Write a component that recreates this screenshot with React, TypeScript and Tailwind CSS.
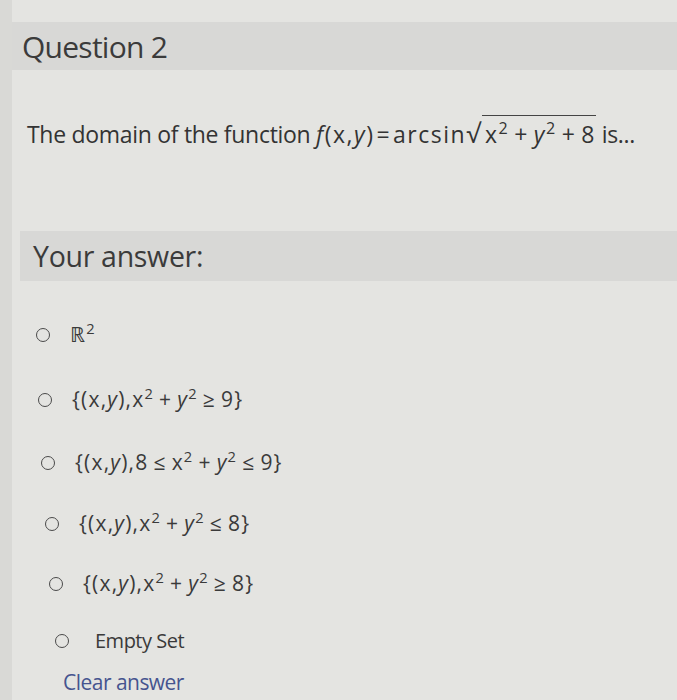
import React from "react";

const font = { fontFamily: '"Open Sans", "Noto Sans", sans-serif' };

function Sup({ children }: { children: React.ReactNode }) {
  return <sup className="relative -top-[0.55em] text-[0.7em]">{children}</sup>;
}

function Op({ children, m = "mx-[5px]" }: { children: React.ReactNode; m?: string }) {
  return <span className={m}>{children}</span>;
}

function Radio() {
  return <span className="inline-block h-[14px] w-[14px] shrink-0 rounded-full border-[1.5px] border-[#4a4a4a]" />;
}

function Option({ pl, h, children }: { pl: string; h: string; children: React.ReactNode }) {
  return (
    <div className={`flex items-center gap-[20px] ${pl} ${h}`}>
      <Radio />
      <span className="text-[21px] tracking-[1.2px] text-[#3a3a3a]">{children}</span>
    </div>
  );
}

function Set({ a, b, c }: { a?: string; b: string; c: string }) {
  return (
    <>
      {"{"}(x,<span className="italic">y</span>),
      {a && (
        <>
          {a}
          <Op>≤</Op>
        </>
      )}
      x<Sup>2</Sup>
      <Op>+</Op>
      <span className="italic">y</span>
      <Sup>2</Sup>
      <Op>{b}</Op>
      {c}
      {"}"}
    </>
  );
}

export default function App() {
  return (
    <div className="flex h-[700px] w-[677px] bg-[#e4e4e1] text-[#333]" style={font}>
      <div className="w-[12px] bg-[#d9d9d6]" />
      <div className="flex flex-1 flex-col">
        <div className="mt-[22px] flex h-[48px] items-center bg-[#d8d8d6] pl-[10px] text-[30px] tracking-tight text-[#3b3b3b]">
          Question 2
        </div>
        <div className="mt-[44px] pl-[15px] text-[23px] tracking-[-0.3px] text-[#333]">
          The domain of the function{" "}
          <span className="tracking-[1.5px]">
            <span className="italic">f</span>(x,<span className="italic">y</span>)<Op m="mx-[2px]">=</Op>arcsin
            <span className="text-[26px]">√</span>
            <span className="border-t-[1.5px] border-[#444] pt-[2px] pl-[3px]">
              x<Sup>2</Sup>
              <Op>+</Op>
              <span className="italic">y</span>
              <Sup>2</Sup>
              <Op>+</Op>8
            </span>
          </span>{" "}
          is...
        </div>
        <div className="ml-[8px] mt-[78px] flex h-[50px] items-center bg-[#d8d8d6] pl-[13px] text-[28.5px] tracking-[-0.3px] text-[#3b3b3b]">
          Your answer:
        </div>
        <div className="mt-[22px] flex flex-col">
          <Option pl="pl-[24px]" h="h-[64px]">
            <span className="font-bold">ℝ</span>
            <Sup>2</Sup>
          </Option>
          <Option pl="pl-[26px]" h="h-[66px]">
            <Set b="≥" c="9" />
          </Option>
          <Option pl="pl-[29px]" h="h-[60px]">
            <Set a="8" b="≤" c="9" />
          </Option>
          <Option pl="pl-[33px]" h="h-[62px]">
            <Set b="≤" c="8" />
          </Option>
          <Option pl="pl-[37px]" h="h-[58px]">
            <Set b="≥" c="8" />
          </Option>
          <div className="flex h-[56px] items-center gap-[26px] pl-[43px]">
            <Radio />
            <span className="text-[20px] tracking-tight text-[#3a3a3a]">Empty Set</span>
          </div>
          <div className="-mt-[2px] pl-[51px] text-[21px] tracking-tight text-[#46548f]">Clear answer</div>
        </div>
      </div>
    </div>
  );
}
